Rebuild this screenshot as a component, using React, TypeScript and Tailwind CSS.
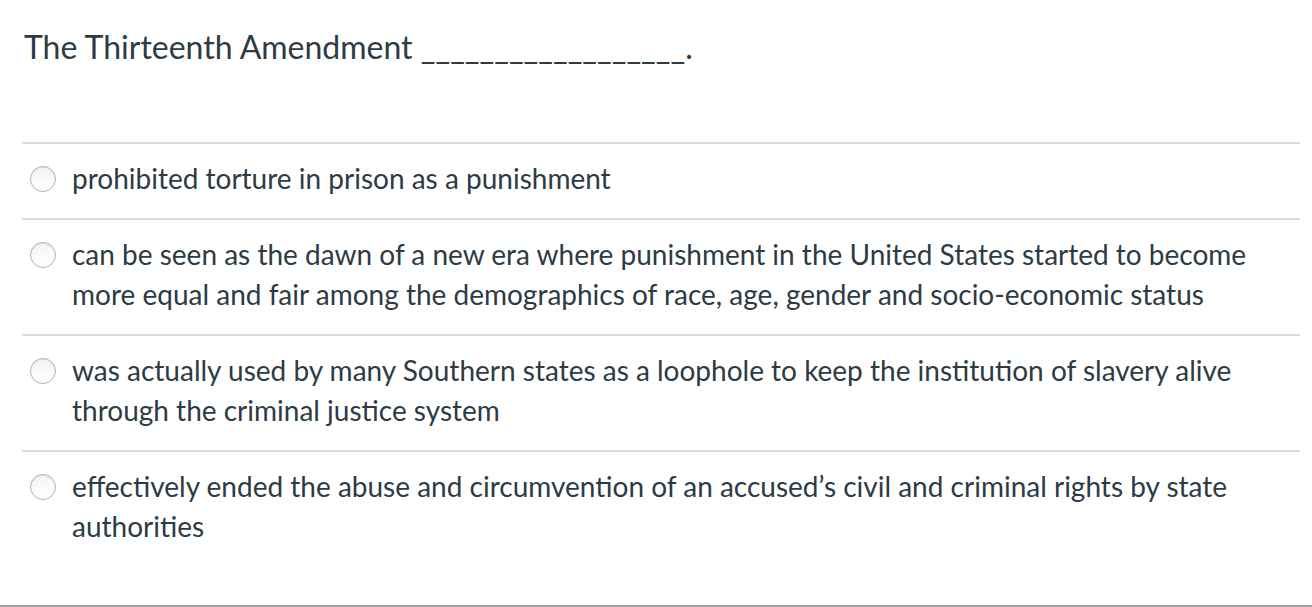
import React from "react";

const options = [
  "prohibited torture in prison as a punishment",
  "can be seen as the dawn of a new era where punishment in the United States started to become more equal and fair among the demographics of race, age, gender and socio-economic status",
  "was actually used by many Southern states as a loophole to keep the institution of slavery alive through the criminal justice system",
  "effectively ended the abuse and circumvention of an accused\u2019s civil and criminal rights by state authorities",
];

function Radio() {
  return (
    <span className="mt-[8px] block h-[26px] w-[26px] shrink-0 rounded-full border border-[#b3b3b3] bg-gradient-to-b from-[#f4f4f4] to-white shadow-[inset_0_1px_1px_rgba(0,0,0,0.08)]" />
  );
}

export default function App() {
  return (
    <div
      className="relative h-[607px] w-full bg-white text-[#2d3b45]"
      style={{ fontFamily: "Lato, 'Noto Sans', sans-serif" }}
    >
      <div className="pl-6 pt-[27px] text-[32px] leading-[40px]">
        The Thirteenth Amendment __________________.
      </div>
      <div className="ml-[22px] mr-3 mt-[75px] border-t-2 border-[#dcdcdc]">
        {options.map((o, i) => (
          <div
            key={i}
            className={`flex gap-4 pt-[14px] pb-[20px] pl-2 pr-8 ${i < options.length - 1 ? "border-b-2 border-[#dcdcdc]" : ""}`}
          >
            <Radio />
            <div className="text-[28px] leading-[40px]">{o}</div>
          </div>
        ))}
      </div>
      <div className="absolute bottom-0 left-0 right-0 h-[2px] bg-[#a0a0a0]" />
    </div>
  );
}
